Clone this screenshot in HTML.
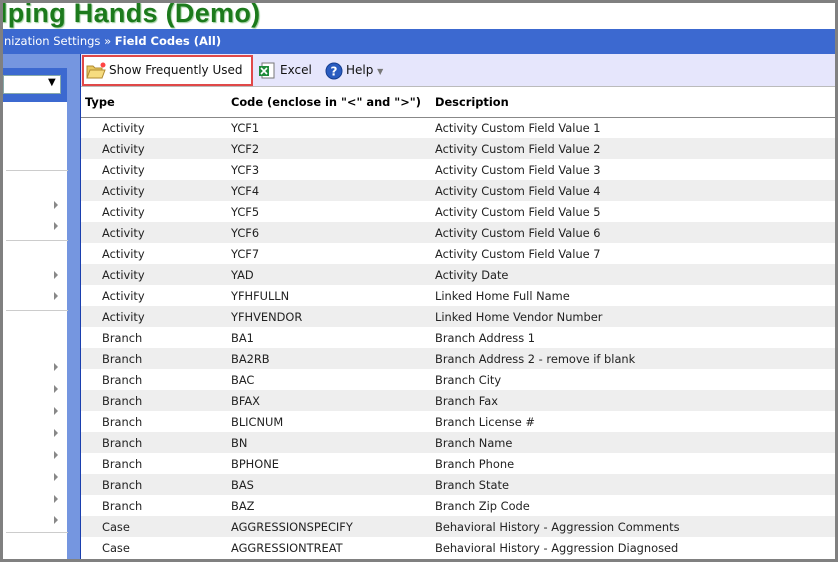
<!DOCTYPE html>
<html><head><style>
*{margin:0;padding:0;box-sizing:border-box}
body{width:838px;height:562px;overflow:hidden;background:#808080;font-family:"DejaVu Sans","Liberation Sans",sans-serif;position:relative}
.abs{position:absolute}
#title{left:3px;top:3px;width:832px;height:26px;background:#fff;overflow:hidden}
#title span{position:absolute;left:-3px;top:-3px;font:bold 27px/27px "Liberation Sans",sans-serif;color:#1c7a1c;text-shadow:1px 1px 1px #9c9;white-space:nowrap;letter-spacing:0.3px}
#crumb{left:3px;top:29px;width:832px;height:25px;background:#3c69d0;color:#fff;font-size:11.5px;line-height:25px;padding-left:1px;white-space:nowrap}
#left{left:3px;top:54px;width:77px;height:505px;background:#7596e0}
#lbox{left:3px;top:68px;width:64px;height:34px;background:#3c69d0}
#dd{left:3px;top:75px;width:58px;height:19px;background:#fff;border:1px solid #8aa}
#lw{left:3px;top:102px;width:64px;height:457px;background:#fff}
#vl{left:80px;top:54px;width:1.5px;height:505px;background:#1a3fae}
.sep{position:absolute;left:3px;width:62px;height:1px;background:#ccc}
.arr{position:absolute;left:54px;width:0;height:0;border-top:4px solid transparent;border-bottom:4px solid transparent;border-left:4px solid #888}
#main{left:81px;top:54px;width:754px;height:505px;background:#fff}
#tb{left:81px;top:54px;width:754px;height:33px;background:#e6e6fc;border-bottom:1px solid #bbb;font-size:12px}
#red{left:82px;top:55px;width:171px;height:31px;border:2px solid #e04848;background:#fff}
table{position:absolute;left:81px;top:88px;width:754px;border-collapse:collapse;font-size:11.4px;color:#222}
th{text-align:left;font-weight:bold;font-size:11.4px;height:29px;border-bottom:1.5px solid #888;padding:0;color:#000}
th:first-child{padding-left:4px}
td{height:21px;padding:0;white-space:nowrap}
tr:nth-child(odd) td{background:#eee}
td.a{padding-left:21px;width:150px}
td.b{width:204px}
</style></head><body>
<div id="title" class="abs"><span>lping Hands (Demo)</span></div>
<div id="crumb" class="abs">nization Settings » <b>Field Codes (All)</b></div>
<div id="left" class="abs"></div>
<div id="lbox" class="abs"></div>
<div id="dd" class="abs"><span style="position:absolute;left:44px;top:1px;font-size:10px">▼</span></div>
<div id="lw" class="abs">
<div class="sep" style="top:68px;left:3px"></div><div class="sep" style="top:138px"></div><div class="sep" style="top:208px"></div><div class="sep" style="top:430px"></div>
<div class="arr" style="top:99px;left:51px"></div><div class="arr" style="top:120px;left:51px"></div>
<div class="arr" style="top:169px;left:51px"></div><div class="arr" style="top:190px;left:51px"></div>
<div class="arr" style="top:261px;left:51px"></div><div class="arr" style="top:283px;left:51px"></div><div class="arr" style="top:305px;left:51px"></div><div class="arr" style="top:327px;left:51px"></div><div class="arr" style="top:349px;left:51px"></div><div class="arr" style="top:371px;left:51px"></div><div class="arr" style="top:393px;left:51px"></div><div class="arr" style="top:414px;left:51px"></div>
</div>
<div id="vl" class="abs"></div>
<div id="main" class="abs"></div>
<div id="tb" class="abs"></div>
<div id="red" class="abs"></div>
<svg class="abs" style="left:86px;top:62px" width="20" height="18" viewBox="0 0 20 18"><path d="M1 4h6l2 2h7v10H1z" fill="#e8c860" stroke="#b08a30"/><path d="M1 16l3-8h15l-3 8z" fill="#f6dc80" stroke="#b08a30"/><circle cx="17" cy="3" r="2.5" fill="#f44"/></svg>
<div class="abs" style="left:109px;top:63px;font-size:12px;color:#111">Show Frequently Used</div>
<svg class="abs" style="left:258px;top:62px" width="18" height="18" viewBox="0 0 18 18"><rect x="4" y="1" width="12" height="15" fill="#fff" stroke="#777"/><rect x="1" y="4" width="10" height="10" fill="#1f8a3a"/><path d="M3 6l6 6M9 6l-6 6" stroke="#fff" stroke-width="1.6"/></svg>
<div class="abs" style="left:280px;top:63px;font-size:12px;color:#111">Excel</div>
<svg class="abs" style="left:325px;top:62px" width="18" height="18" viewBox="0 0 18 18"><circle cx="9" cy="9" r="8" fill="#2a5cc0" stroke="#163e90"/><text x="9" y="13.5" font-size="12" font-weight="bold" fill="#fff" text-anchor="middle" font-family="DejaVu Sans">?</text></svg>
<div class="abs" style="left:346px;top:63px;font-size:12px;color:#111">Help <span style="font-size:8px;color:#777">▼</span></div>
<table>
<tr><th style="width:150px">Type</th><th style="width:204px">Code (enclose in "&lt;" and "&gt;")</th><th>Description</th></tr>
<tr><td class="a">Activity</td><td class="b">YCF1</td><td>Activity Custom Field Value 1</td></tr>
<tr><td class="a">Activity</td><td class="b">YCF2</td><td>Activity Custom Field Value 2</td></tr>
<tr><td class="a">Activity</td><td class="b">YCF3</td><td>Activity Custom Field Value 3</td></tr>
<tr><td class="a">Activity</td><td class="b">YCF4</td><td>Activity Custom Field Value 4</td></tr>
<tr><td class="a">Activity</td><td class="b">YCF5</td><td>Activity Custom Field Value 5</td></tr>
<tr><td class="a">Activity</td><td class="b">YCF6</td><td>Activity Custom Field Value 6</td></tr>
<tr><td class="a">Activity</td><td class="b">YCF7</td><td>Activity Custom Field Value 7</td></tr>
<tr><td class="a">Activity</td><td class="b">YAD</td><td>Activity Date</td></tr>
<tr><td class="a">Activity</td><td class="b">YFHFULLN</td><td>Linked Home Full Name</td></tr>
<tr><td class="a">Activity</td><td class="b">YFHVENDOR</td><td>Linked Home Vendor Number</td></tr>
<tr><td class="a">Branch</td><td class="b">BA1</td><td>Branch Address 1</td></tr>
<tr><td class="a">Branch</td><td class="b">BA2RB</td><td>Branch Address 2 - remove if blank</td></tr>
<tr><td class="a">Branch</td><td class="b">BAC</td><td>Branch City</td></tr>
<tr><td class="a">Branch</td><td class="b">BFAX</td><td>Branch Fax</td></tr>
<tr><td class="a">Branch</td><td class="b">BLICNUM</td><td>Branch License #</td></tr>
<tr><td class="a">Branch</td><td class="b">BN</td><td>Branch Name</td></tr>
<tr><td class="a">Branch</td><td class="b">BPHONE</td><td>Branch Phone</td></tr>
<tr><td class="a">Branch</td><td class="b">BAS</td><td>Branch State</td></tr>
<tr><td class="a">Branch</td><td class="b">BAZ</td><td>Branch Zip Code</td></tr>
<tr><td class="a">Case</td><td class="b">AGGRESSIONSPECIFY</td><td>Behavioral History - Aggression Comments</td></tr>
<tr><td class="a">Case</td><td class="b">AGGRESSIONTREAT</td><td>Behavioral History - Aggression Diagnosed</td></tr>
</table>
<div class="abs" style="left:0;top:559px;width:838px;height:3px;background:#808080"></div>
<div class="abs" style="left:835px;top:0;width:3px;height:562px;background:#808080"></div>
</body></html>
